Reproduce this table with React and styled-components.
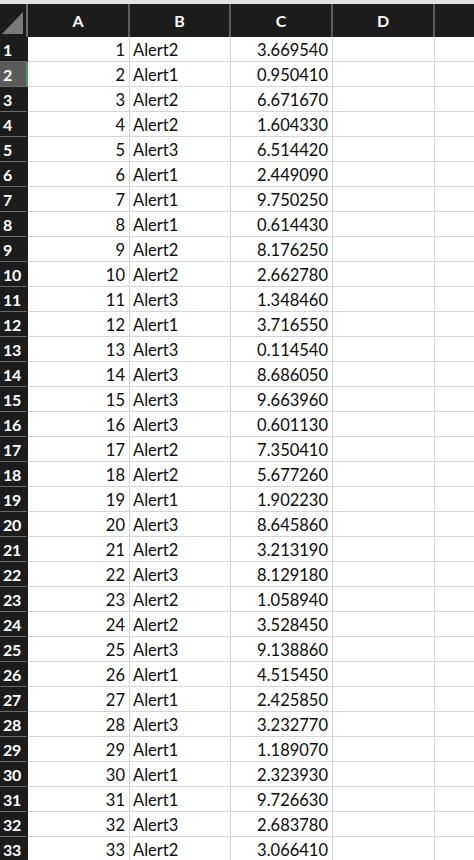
import React from 'react';
import styled, { createGlobalStyle } from 'styled-components';

const GlobalStyle = createGlobalStyle`
  html, body {
    margin: 0;
    padding: 0;
    background: #ffffff;
    overflow: hidden;
  }
  body {
    font-family: Lato, 'Open Sans', sans-serif;
  }
`;

const data = [
  ['Alert2', '3.669540'], ['Alert1', '0.950410'], ['Alert2', '6.671670'],
  ['Alert2', '1.604330'], ['Alert3', '6.514420'], ['Alert1', '2.449090'],
  ['Alert1', '9.750250'], ['Alert1', '0.614430'], ['Alert2', '8.176250'],
  ['Alert2', '2.662780'], ['Alert3', '1.348460'], ['Alert1', '3.716550'],
  ['Alert3', '0.114540'], ['Alert3', '8.686050'], ['Alert3', '9.663960'],
  ['Alert3', '0.601130'], ['Alert2', '7.350410'], ['Alert2', '5.677260'],
  ['Alert1', '1.902230'], ['Alert3', '8.645860'], ['Alert2', '3.213190'],
  ['Alert3', '8.129180'], ['Alert2', '1.058940'], ['Alert2', '3.528450'],
  ['Alert3', '9.138860'], ['Alert1', '4.515450'], ['Alert1', '2.425850'],
  ['Alert3', '3.232770'], ['Alert1', '1.189070'], ['Alert1', '2.323930'],
  ['Alert1', '9.726630'], ['Alert3', '2.683780'], ['Alert2', '3.066410'],
];

const COLS = '28px 102px 101px 102px 102px 1fr';

const Sheet = styled.div`
  width: 474px;
  height: 860px;
  overflow: hidden;
  background: #ffffff;
  border-top: 4px solid #e2e2e2;
  box-sizing: border-box;
`;

const HeaderRow = styled.div`
  display: grid;
  grid-template-columns: ${COLS};
  height: 33px;
  background: #1c1c1c;
`;

const Corner = styled.div`
  position: relative;
  border-right: 2px solid #6a6a6a;
  box-sizing: border-box;
  svg {
    position: absolute;
    right: 3px;
    bottom: 3px;
  }
`;

const ColHead = styled.div`
  display: flex;
  align-items: center;
  justify-content: center;
  color: #ffffff;
  font-size: 16px;
  font-weight: 700;
  border-right: 2px solid #5c5c5c;
  box-sizing: border-box;
  &:last-child { border-right: none; }
`;

const Row = styled.div`
  display: grid;
  grid-template-columns: ${COLS};
  height: 25px;
`;

const RowHead = styled.div`
  display: flex;
  align-items: center;
  padding-left: 3px;
  color: #ffffff;
  font-size: 16px;
  font-weight: 700;
  letter-spacing: -0.3px;
  background: ${p => (p.$active ? '#5a5a5a' : '#1c1c1c')};
  border-bottom: 1px solid #6a6a6a;
  border-right: 2px solid ${p => (p.$active ? '#3f9b5e' : '#1c1c1c')};
  box-sizing: border-box;
  overflow: hidden;
`;

const Cell = styled.div`
  display: flex;
  align-items: center;
  justify-content: ${p => (p.$right ? 'flex-end' : 'flex-start')};
  padding: 1px 4px 0 3px;
  font-size: 16.5px;
  color: #0c0c0c;
  border-right: 1px solid #d4d4d4;
  border-bottom: 1px solid #d4d4d4;
  box-sizing: border-box;
  white-space: nowrap;
  &:last-child { border-right: none; }
`;

export default function App() {
  return (
    <>
      <GlobalStyle />
      <Sheet>
        <HeaderRow>
          <Corner>
            <svg width="21" height="22" viewBox="0 0 21 22">
              <polygon points="21,0 21,22 0,22" fill="#7a7a7a" />
            </svg>
          </Corner>
          {['A', 'B', 'C', 'D', ''].map((c, i) => (
            <ColHead key={i}>{c}</ColHead>
          ))}
        </HeaderRow>
        {data.map(([label, value], i) => (
          <Row key={i}>
            <RowHead $active={i === 1}>{i + 1}</RowHead>
            <Cell $right>{i + 1}</Cell>
            <Cell>{label}</Cell>
            <Cell $right>{value}</Cell>
            <Cell />
            <Cell />
          </Row>
        ))}
      </Sheet>
    </>
  );
}
